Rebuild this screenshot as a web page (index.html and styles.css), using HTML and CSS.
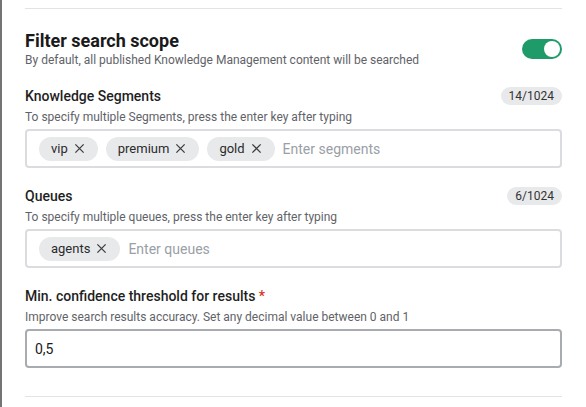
FILE: index.html
```html
<!DOCTYPE html>
<html lang="en">
<head>
    <meta charset="UTF-8">
    <meta name="viewport" content="width=device-width, initial-scale=1.0">
    <title>Filter search scope</title>
    <link rel="stylesheet" href="styles.css">
</head>
<body>
    <div class="panel">
        <div class="section">
            <div class="section-head">
                <div>
                    <h2>Filter search scope</h2>
                    <p class="section-desc">By default, all published Knowledge Management content will be searched</p>
                </div>
                <button type="button" class="switch on" aria-label="Filter search scope"><span class="knob"></span></button>
            </div>

            <div class="field">
                <div class="field-label">
                    <label>Knowledge Segments</label>
                    <span class="counter">14/1024</span>
                </div>
                <p class="hint">To specify multiple Segments, press the enter key after typing</p>
                <div class="tag-input">
                    <span class="chip">vip <svg class="chip-x" viewBox="0 0 12 12"><path d="M1.5 1.5l9 9M10.5 1.5l-9 9"/></svg></span>
                    <span class="chip">premium <svg class="chip-x" viewBox="0 0 12 12"><path d="M1.5 1.5l9 9M10.5 1.5l-9 9"/></svg></span>
                    <span class="chip">gold <svg class="chip-x" viewBox="0 0 12 12"><path d="M1.5 1.5l9 9M10.5 1.5l-9 9"/></svg></span>
                    <input type="text" placeholder="Enter segments">
                </div>
            </div>

            <div class="field">
                <div class="field-label">
                    <label>Queues</label>
                    <span class="counter">6/1024</span>
                </div>
                <p class="hint">To specify multiple queues, press the enter key after typing</p>
                <div class="tag-input">
                    <span class="chip">agents <svg class="chip-x" viewBox="0 0 12 12"><path d="M1.5 1.5l9 9M10.5 1.5l-9 9"/></svg></span>
                    <input type="text" placeholder="Enter queues">
                </div>
            </div>

            <div class="field">
                <div class="field-label">
                    <label for="confidence">Min. confidence threshold for results <span class="required">*</span></label>
                </div>
                <p class="hint">Improve search results accuracy. Set any decimal value between 0 and 1</p>
                <input type="text" id="confidence" class="text-input" value="0,5">
            </div>
        </div>
    </div>
</body>
</html>
```

FILE: styles.css
```css
* {
    margin: 0;
    padding: 0;
    box-sizing: border-box;
}

body {
    background: #fff;
    color: #1f1f1f;
    font-family: Roboto, 'Liberation Sans', Arial, sans-serif;
    min-height: 100vh;
    border-left: 2px solid #747474;
}

.panel {
    padding: 8px 24px 0 23px;
}

.section {
    border-top: 1px solid #e3e3e3;
    border-bottom: 1px solid #e3e3e3;
    padding: 21px 0 28px;
}

.section-head {
    display: flex;
    align-items: center;
    justify-content: space-between;
    margin-bottom: 18px;
}

.section-head h2 {
    font-size: 18px;
    line-height: 22px;
    font-weight: 700;
    color: #1a1a1a;
}

.section-desc {
    font-size: 12px;
    line-height: 16px;
    color: #5f6368;
}

.switch {
    width: 40px;
    height: 20px;
    border: none;
    border-radius: 10px;
    background: #c4c7ca;
    padding: 2px;
    display: flex;
    cursor: pointer;
}

.switch.on {
    background: #1f9b69;
    justify-content: flex-end;
}

.knob {
    width: 16px;
    height: 16px;
    border-radius: 50%;
    background: #fff;
}

.field {
    margin-bottom: 18px;
}

.field:last-child {
    margin-bottom: 0;
}

.field-label {
    display: flex;
    align-items: center;
    justify-content: space-between;
    height: 20px;
}

.field-label label {
    font-size: 14px;
    font-weight: 500;
    color: #1f1f1f;
}

.required {
    color: #d93025;
}

.counter {
    background: #e8e9eb;
    color: #333;
    font-size: 12px;
    line-height: 18px;
    height: 18px;
    padding: 0 8px;
    border-radius: 9px;
}

.hint {
    margin-top: 3px;
    font-size: 12px;
    line-height: 16px;
    color: #5f6368;
}

.tag-input {
    margin-top: 4px;
    height: 39px;
    border: 2px solid #dadcdf;
    border-radius: 4px;
    padding: 0 12px;
    display: flex;
    align-items: center;
    gap: 8px;
}

.chip {
    display: inline-flex;
    align-items: center;
    gap: 6px;
    height: 24px;
    padding: 0 13px 0 12px;
    border-radius: 12px;
    background: #e8e9eb;
    color: #2b2b2b;
    font-size: 13px;
}

.chip-x {
    width: 11px;
    height: 11px;
    fill: none;
    stroke: #3c3c3c;
    stroke-width: 1.4;
}

.tag-input input {
    border: none;
    outline: none;
    flex: 1;
    min-width: 0;
    font-family: inherit;
    font-size: 14px;
    color: #1f1f1f;
    background: none;
}

.tag-input input::placeholder {
    color: #9aa0a6;
}

.text-input {
    display: block;
    margin-top: 4px;
    width: 100%;
    height: 39px;
    border: 2px solid #a8abaf;
    border-radius: 4px;
    padding: 0 8px;
    font-family: inherit;
    font-size: 14px;
    color: #1a1a1a;
    outline: none;
}
```
